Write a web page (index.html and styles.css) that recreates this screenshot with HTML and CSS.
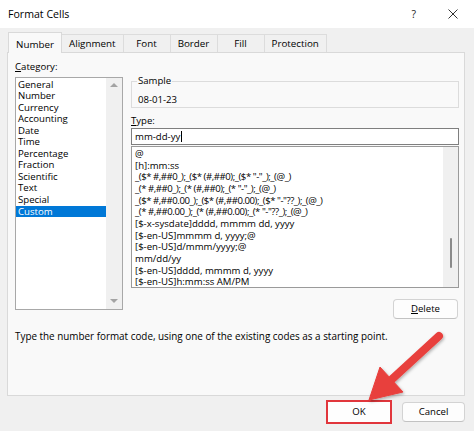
FILE: index.html
```html
<!DOCTYPE html>
<html>
<head>
<meta charset="utf-8">
<title>Format Cells</title>
<link rel="stylesheet" href="styles.css">
</head>
<body>
<div class="window">
  <div class="titlebar">
    <span class="title">Format Cells</span>
    <span class="help">?</span>
    <svg class="close" width="10" height="10" viewBox="0 0 10 10"><path d="M0.5 0.5 L9.5 9.5 M9.5 0.5 L0.5 9.5" stroke="#333" stroke-width="1" fill="none"/></svg>
  </div>
  <div class="body">
    <div class="tabs">
      <div class="tab active">Number</div>
      <div class="tab">Alignment</div>
      <div class="tab">Font</div>
      <div class="tab">Border</div>
      <div class="tab">Fill</div>
      <div class="tab">Protection</div>
    </div>
    <div class="panel">
      <div class="cols">
        <div class="left">
          <div class="cat-label"><u>C</u>ategory:</div>
          <div class="listbox">
            <div class="items">
              <div class="item">General</div>
              <div class="item">Number</div>
              <div class="item">Currency</div>
              <div class="item">Accounting</div>
              <div class="item">Date</div>
              <div class="item">Time</div>
              <div class="item">Percentage</div>
              <div class="item">Fraction</div>
              <div class="item">Scientific</div>
              <div class="item">Text</div>
              <div class="item">Special</div>
              <div class="item sel">Custom</div>
            </div>
            <div class="vscroll">
              <span class="tri up"></span>
              <span class="tri down"></span>
            </div>
          </div>
        </div>
        <div class="right">
          <fieldset class="sample">
            <legend>Sample</legend>
            <div class="sample-val">08-01-23</div>
          </fieldset>
          <div class="type-label"><u>T</u>ype:</div>
          <div class="type-input">mm-dd-yy<span class="caret"></span></div>
          <div class="formats">
            <div class="fmt-items">
              <div class="fmt">@</div>
              <div class="fmt">[h]:mm:ss</div>
              <div class="fmt sym">_($* #,##0_);_($* (#,##0);_($* "-"_);_(@_)</div>
              <div class="fmt sym">_(* #,##0_);_(* (#,##0);_(* "-"_);_(@_)</div>
              <div class="fmt sym">_($* #,##0.00_);_($* (#,##0.00);_($* "-"??_);_(@_)</div>
              <div class="fmt sym">_(* #,##0.00_);_(* (#,##0.00);_(* "-"??_);_(@_)</div>
              <div class="fmt">[$-x-sysdate]dddd, mmmm dd, yyyy</div>
              <div class="fmt">[$-en-US]mmmm d, yyyy;@</div>
              <div class="fmt">[$-en-US]d/mmm/yyyy;@</div>
              <div class="fmt">mm/dd/yy</div>
              <div class="fmt">[$-en-US]dddd, mmmm d, yyyy</div>
              <div class="fmt">[$-en-US]h:mm:ss AM/PM</div>
            </div>
            <div class="fscroll"><span class="thumb"></span></div>
          </div>
          <div class="delete-row"><div class="btn delete"><u>D</u>elete</div></div>
        </div>
      </div>
      <p class="hint">Type the number format code, using one of the existing codes as a starting point.</p>
    </div>
    <div class="footer">
      <div class="okmark"><div class="btn ok">OK</div></div>
      <div class="btn cancel">Cancel</div>
    </div>
  </div>
  <svg class="arrow" width="474" height="431" viewBox="0 0 474 431">
    <defs>
      <filter id="sh" x="-20%" y="-20%" width="140%" height="140%">
        <feDropShadow dx="1" dy="1.5" stdDeviation="1.5" flood-color="#000" flood-opacity="0.3"/>
      </filter>
    </defs>
    <g filter="url(#sh)" fill="#e8403d" stroke="#e8403d">
      <line x1="439" y1="336" x2="390" y2="381" stroke-width="8" stroke-linecap="round"/>
      <polygon points="369,400 403,392 380,367" stroke-width="1" stroke-linejoin="round"/>
    </g>
  </svg>
</div>
</body>
</html>
```

FILE: styles.css
```css
html, body {
  margin: 0;
  padding: 0;
}
body {
  width: 474px;
  height: 431px;
  overflow: hidden;
  font-family: "Open Sans", "Noto Sans", sans-serif;
  font-size: 9.6px;
  color: #000;
  background: #f0f0f0;
}
.window {
  position: relative;
  width: 474px;
  height: 431px;
  background: #f0f0f0;
}
.titlebar {
  height: 28px;
  background: #fff;
  display: flex;
  align-items: center;
  padding: 0 16px 0 8px;
}
.title {
  flex: 1;
  font-size: 10.6px;
  line-height: 14px;
}
.help {
  font-size: 10.5px;
  line-height: 14px;
  margin-right: 32px;
  color: #222;
}
.close {
  display: block;
}
.body {
  padding: 6px 9px 0 7px;
}
.tabs {
  display: flex;
  align-items: flex-end;
  height: 18px;
  padding-left: 1px;
}
.tab {
  box-sizing: border-box;
  min-width: 48px;
  height: 18px;
  padding: 0 7px;
  border: 1px solid #dcdcdc;
  border-bottom: none;
  margin-right: -1px;
  background: #f0f0f0;
  line-height: 17px;
  text-align: center;
  font-size: 9.8px;
}
.tab.active {
  position: relative;
  z-index: 1;
  height: 21px;
  padding-top: 3px;
  margin-bottom: -1px;
  background: #f9f9f9;
  border-color: #d9d9d9;
}
.panel {
  box-sizing: border-box;
  height: 344px;
  border: 1px solid #d9d9d9;
  background: #f9f9f9;
  padding: 8px 5px 0 7px;
}
.cols {
  display: flex;
  gap: 8px;
}
.left {
  width: 108px;
  flex: none;
}
.cat-label {
  line-height: 12px;
  margin-bottom: 4px;
}
.listbox {
  box-sizing: border-box;
  height: 233px;
  border: 1px solid #a8a8a8;
  background: #fff;
  display: flex;
}
.items {
  flex: 1;
  padding-top: 0.5px;
}
.item {
  line-height: 11.55px;
  padding-left: 2px;
  white-space: nowrap;
}
.item.sel {
  background: #0078d7;
  color: #fff;
}
.vscroll {
  width: 16px;
  background: #f0f0f0;
  display: flex;
  flex-direction: column;
  justify-content: space-between;
  align-items: center;
  padding: 5px 0 6px;
  box-sizing: border-box;
}
.tri {
  width: 0;
  height: 0;
  border-left: 4px solid transparent;
  border-right: 4px solid transparent;
}
.tri.up {
  border-bottom: 4px solid #a3a3a3;
}
.tri.down {
  border-top: 4px solid #a3a3a3;
}
.right {
  flex: 1;
  padding-top: 14px;
  min-width: 0;
}
.sample {
  margin: 0;
  border: 1px solid #dcdcdc;
  padding: 0 5px 1px;
  min-width: 0;
}
.sample legend {
  padding: 0 1px;
  line-height: 12px;
}
.sample-val {
  padding-top: 7px;
  padding-left: 1px;
  line-height: 12px;
}
.type-label {
  margin-top: 7px;
  line-height: 12px;
}
.type-input {
  box-sizing: border-box;
  margin-top: 1px;
  height: 17px;
  border: 1px solid #7f7f7f;
  background: #fff;
  padding-left: 3px;
  line-height: 15px;
  display: flex;
  align-items: center;
}
.caret {
  display: inline-block;
  width: 1px;
  height: 11px;
  background: #000;
  margin-left: 0.5px;
}
.formats {
  box-sizing: border-box;
  margin-top: 1px;
  height: 142px;
  border: 1px solid #9a9a9a;
  background: #fff;
  display: flex;
}
.fmt-items {
  flex: 1;
  padding-top: 1px;
  padding-left: 3px;
  overflow: hidden;
}
.fmt {
  line-height: 11.65px;
  white-space: nowrap;
}
.fmt.sym {
  letter-spacing: -0.45px;
}
.fscroll {
  width: 15px;
  background: #f0f0f0;
  display: flex;
  justify-content: center;
  padding-top: 91px;
  box-sizing: border-box;
}
.thumb {
  display: block;
  width: 2px;
  height: 30px;
  background: #8a8a8a;
  border-radius: 1px;
}
.delete-row {
  display: flex;
  justify-content: flex-end;
  margin-top: 11px;
  padding-right: 1px;
}
.btn {
  box-sizing: border-box;
  height: 20px;
  border: 1px solid #d3d3d3;
  border-bottom-color: #c2c2c2;
  border-radius: 4px;
  background: #fdfdfd;
  line-height: 18px;
  text-align: center;
}
.delete {
  width: 65px;
}
.hint {
  margin: 11px 0 0;
  line-height: 12px;
  white-space: nowrap;
  font-size: 9.9px;
}
.footer {
  display: flex;
  justify-content: flex-end;
  align-items: flex-start;
  gap: 10px;
  margin-top: 6px;
}
.okmark {
  display: flex;
  border: 2px solid #e1363c;
  margin: -2px 0;
}
.ok {
  width: 62px;
  border: none;
  border-radius: 0;
  background: #fefefe;
  line-height: 20px;
}
.cancel {
  width: 63px;
}
.arrow {
  position: absolute;
  left: 0;
  top: 0;
  pointer-events: none;
}
```
